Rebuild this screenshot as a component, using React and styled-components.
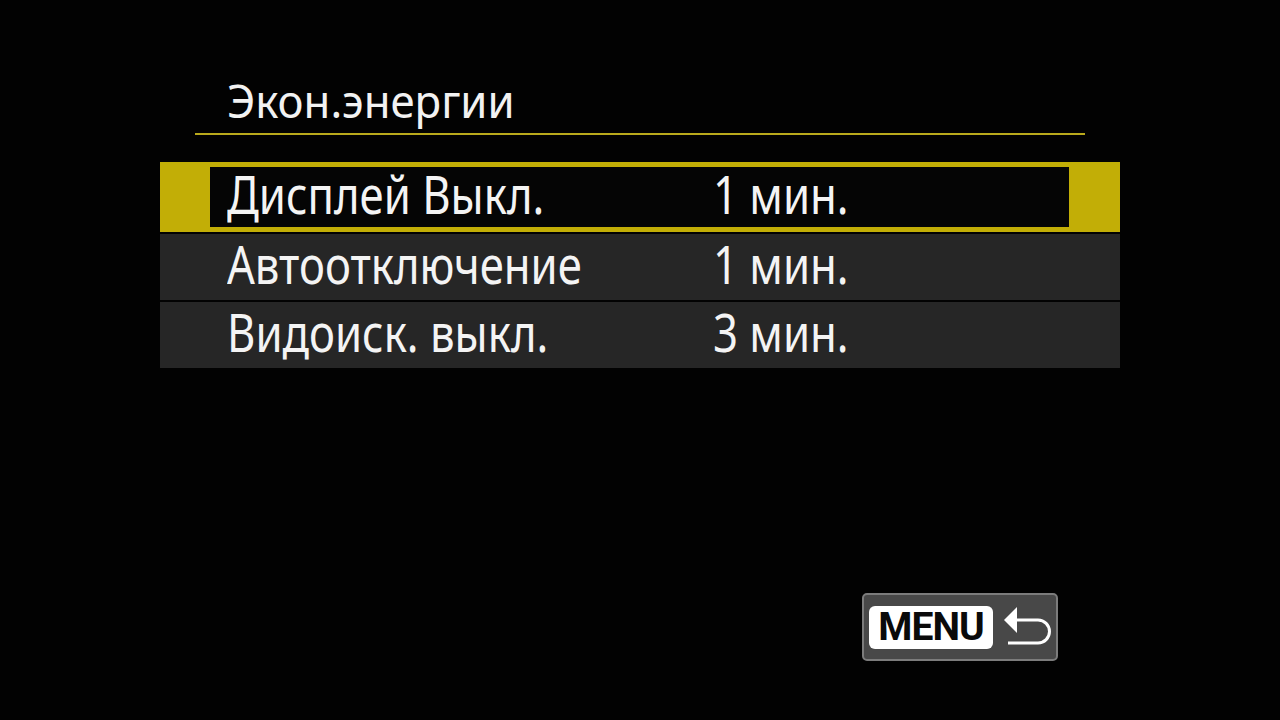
import styled, { createGlobalStyle } from "styled-components";

const Global = createGlobalStyle`
  html, body {
    margin: 0;
    padding: 0;
    background: #000;
  }
  body {
    font-family: "Noto Sans", "Open Sans", sans-serif;
    color: #f4f4f4;
  }
`;

const Screen = styled.div`
  width: 1280px;
  height: 720px;
  background: #020202;
  box-sizing: border-box;
  padding: 72px 160px 0;
  display: flex;
  flex-direction: column;
`;

const TitleBar = styled.div`
  margin: 0 35px 0 35px;
  height: 61px;
  border-bottom: 2px solid #b9a91c;
  display: flex;
  align-items: flex-end;
  padding-left: 32px;
`;

const Title = styled.h1`
  margin: 0 0 5px;
  font-weight: 400;
  font-size: 46px;
  line-height: 56px;
  color: #f2f2f2;
  transform: scaleX(0.95);
  transform-origin: left center;
`;

const List = styled.div`
  margin-top: 27px;
  display: flex;
  flex-direction: column;
  gap: 2px;
`;

const Row = styled.div`
  height: ${(p) => (p.$selected ? "70px" : "66px")};
  box-sizing: border-box;
  background: ${(p) => (p.$selected ? "#c2ae06" : "#262626")};
  padding: ${(p) => (p.$selected ? "5px 51px 5px 50px" : "0 51px 0 50px")};
  display: flex;
`;

const Inner = styled.div`
  flex: 1;
  display: flex;
  align-items: center;
  background: ${(p) => (p.$selected ? "#050505" : "transparent")};
  padding-left: 17px;
  padding-bottom: 6px;
`;

const Cell = styled.span`
  width: ${(p) => p.$width || "auto"};
  display: inline-block;
  font-size: 52px;
  line-height: 1;
  white-space: nowrap;
  transform: scaleX(0.84);
  transform-origin: left center;
`;

const Footer = styled.div`
  margin-top: auto;
  margin-bottom: 59px;
  display: flex;
  justify-content: flex-end;
  padding-right: 62px;
`;

const MenuButton = styled.div`
  width: 196px;
  height: 68px;
  box-sizing: border-box;
  border: 2px solid #7c7c7c;
  border-radius: 5px;
  background: #484848;
  display: flex;
  align-items: center;
  padding-left: 5px;
  gap: 8px;
`;

const MenuLabel = styled.span`
  width: 124px;
  height: 43px;
  background: #fff;
  border-radius: 6px;
  color: #0a0a0a;
  font-family: Roboto, "Liberation Sans", sans-serif;
  font-weight: 700;
  font-size: 39px;
  letter-spacing: -1px;
  display: flex;
  align-items: center;
  justify-content: center;
`;

const items = [
  { label: "Дисплей Выкл.", value: "1 мин.", selected: true },
  { label: "Автоотключение", value: "1 мин." },
  { label: "Видоиск. выкл.", value: "3 мин." },
];

function ReturnIcon() {
  return (
    <svg width="54" height="46" viewBox="0 0 54 46">
      <polygon points="3,16 16,3 16,29" fill="#fff" />
      <path
        d="M15 16 H37 A11.5 11.5 0 0 1 37 39 H7"
        fill="none"
        stroke="#fff"
        strokeWidth="3"
      />
    </svg>
  );
}

export default function App() {
  return (
    <>
      <Global />
      <Screen>
        <TitleBar>
          <Title>Экон.энергии</Title>
        </TitleBar>
        <List>
          {items.map((it) => (
            <Row key={it.label} $selected={it.selected}>
              <Inner $selected={it.selected}>
                <Cell $width="486px">{it.label}</Cell>
                <Cell>{it.value}</Cell>
              </Inner>
            </Row>
          ))}
        </List>
        <Footer>
          <MenuButton>
            <MenuLabel>MENU</MenuLabel>
            <ReturnIcon />
          </MenuButton>
        </Footer>
      </Screen>
    </>
  );
}
